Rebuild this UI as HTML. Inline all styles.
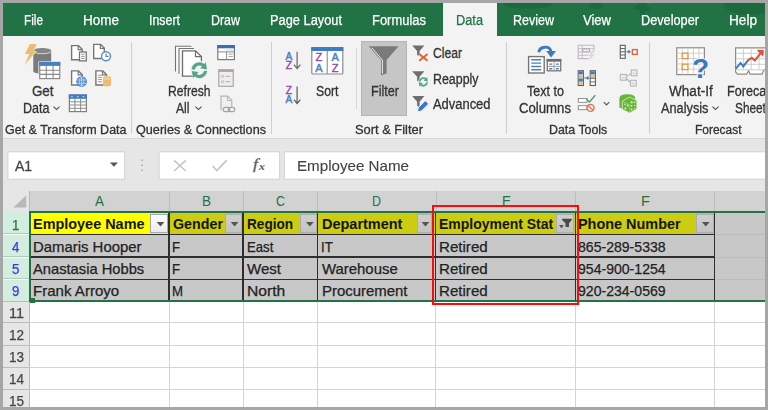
<!DOCTYPE html>
<html><head><meta charset="utf-8"><title>Excel</title>
<style>
html,body{margin:0;padding:0}
body{width:768px;height:410px;overflow:hidden;position:relative;background:#a6a6a6;font-family:"Liberation Sans",sans-serif}
#app{position:absolute;left:0;top:0;width:768px;height:410px;overflow:hidden;filter:blur(0.45px)}
.a{position:absolute}
.t{position:absolute;white-space:nowrap;transform-origin:0 0;line-height:1}
svg{position:absolute;overflow:visible}
</style></head><body><div id="app">
<!-- bg -->
<div class="a" style="left:0px;top:0px;width:768px;height:36.4px;background:#217346;"></div>
<svg style="left:0;top:0" width="768" height="36" viewBox="0 0 768 36"><g fill="#1b6039" opacity="0.5"><ellipse cx="528" cy="4" rx="25" ry="4.5"/><ellipse cx="596" cy="5.5" rx="7" ry="3.5"/><path d="M638 3H647V7H651V11H645V14H640V10H635V6H638Z"/><ellipse cx="750" cy="4" rx="26" ry="11"/><ellipse cx="470" cy="2" rx="30" ry="3"/></g></svg>
<div class="a" style="left:443px;top:3px;width:54px;height:34px;background:#f3f3f3;"></div>
<div class="a" style="left:0px;top:36.4px;width:768px;height:101.6px;background:#f3f3f3;"></div>
<div class="a" style="left:0px;top:138px;width:768px;height:1px;background:#d6d6d6;"></div>
<div class="a" style="left:130.5px;top:42px;width:1px;height:92px;background:#cfcfcf;"></div>
<div class="a" style="left:271px;top:42px;width:1px;height:92px;background:#cfcfcf;"></div>
<div class="a" style="left:506px;top:42px;width:1px;height:92px;background:#cfcfcf;"></div>
<div class="a" style="left:648.5px;top:42px;width:1px;height:92px;background:#cfcfcf;"></div>
<div class="a" style="left:355.5px;top:47.5px;width:1px;height:61px;background:#d6d6d6;"></div>
<div class="a" style="left:361px;top:40.5px;width:45.5px;height:75.5px;background:#c6c6c6;border:1px solid #b4b4b4;box-sizing:border-box;"></div>
<div class="a" style="left:0px;top:139px;width:768px;height:52px;background:#e6e6e6;"></div>
<svg style="left:0;top:140px" width="768" height="50" viewBox="0 140 768 50"><g fill="#fff" stroke="#d2d2d2" stroke-width="1"><rect x="7.9" y="151.8" width="116.7" height="27.4"/><rect x="159.1" y="151.8" width="120.5" height="27.4"/><rect x="284.3" y="151.8" width="490" height="27.4"/></g></svg>
<div class="a" style="left:0px;top:191px;width:768px;height:20px;background:#e6e6e6;"></div>
<div class="a" style="left:29.5px;top:191px;width:740px;height:20px;background:#d2d2d2;"></div>
<div class="a" style="left:168.5px;top:191px;width:1px;height:20px;background:#bdbdbd;"></div>
<div class="a" style="left:242.5px;top:191px;width:1px;height:20px;background:#bdbdbd;"></div>
<div class="a" style="left:317px;top:191px;width:1px;height:20px;background:#bdbdbd;"></div>
<div class="a" style="left:435.5px;top:191px;width:1px;height:20px;background:#bdbdbd;"></div>
<div class="a" style="left:575px;top:191px;width:1px;height:20px;background:#bdbdbd;"></div>
<div class="a" style="left:714px;top:191px;width:1px;height:20px;background:#bdbdbd;"></div>
<div class="a" style="left:0px;top:211px;width:768px;height:200px;background:#fff;"></div>
<div class="a" style="left:29.5px;top:211px;width:740px;height:90px;background:#c8c8c8;"></div>
<div class="a" style="left:0px;top:211px;width:29px;height:200px;background:#e6e6e6;"></div>
<div class="a" style="left:0px;top:212px;width:29px;height:89px;background:#d3eddf;"></div>
<div class="a" style="left:28.7px;top:191px;width:1px;height:220px;background:#b9b9b9;"></div>
<div class="a" style="left:0px;top:233.3px;width:29px;height:1px;background:#b4c9bd;"></div>
<div class="a" style="left:0px;top:234.3px;width:29px;height:1.2px;background:#f4fbf7;"></div>
<div class="a" style="left:0px;top:255.8px;width:29px;height:1px;background:#b4c9bd;"></div>
<div class="a" style="left:0px;top:256.8px;width:29px;height:1.2px;background:#f4fbf7;"></div>
<div class="a" style="left:0px;top:278.1px;width:29px;height:1px;background:#b4c9bd;"></div>
<div class="a" style="left:0px;top:279.1px;width:29px;height:1.2px;background:#f4fbf7;"></div>
<div class="a" style="left:0px;top:300.5px;width:29px;height:1px;background:#bdbdbd;"></div>
<div class="a" style="left:0px;top:322.2px;width:29px;height:1px;background:#bdbdbd;"></div>
<div class="a" style="left:0px;top:344.5px;width:29px;height:1px;background:#bdbdbd;"></div>
<div class="a" style="left:0px;top:366.5px;width:29px;height:1px;background:#bdbdbd;"></div>
<div class="a" style="left:0px;top:388.7px;width:29px;height:1px;background:#bdbdbd;"></div>
<div class="a" style="left:29px;top:322.2px;width:740px;height:1px;background:#d4d4d4;"></div>
<div class="a" style="left:29px;top:344.5px;width:740px;height:1px;background:#d4d4d4;"></div>
<div class="a" style="left:29px;top:366.5px;width:740px;height:1px;background:#d4d4d4;"></div>
<div class="a" style="left:29px;top:388.7px;width:740px;height:1px;background:#d4d4d4;"></div>
<div class="a" style="left:168.5px;top:301px;width:1px;height:110px;background:#d4d4d4;"></div>
<div class="a" style="left:242.5px;top:301px;width:1px;height:110px;background:#d4d4d4;"></div>
<div class="a" style="left:317.2px;top:301px;width:1px;height:110px;background:#d4d4d4;"></div>
<div class="a" style="left:435px;top:301px;width:1px;height:110px;background:#d4d4d4;"></div>
<div class="a" style="left:574.7px;top:301px;width:1px;height:110px;background:#d4d4d4;"></div>
<div class="a" style="left:713.8px;top:301px;width:1px;height:110px;background:#d4d4d4;"></div>
<div class="a" style="left:715px;top:234px;width:54px;height:1px;background:#bcbcbc;"></div>
<div class="a" style="left:715px;top:256.5px;width:54px;height:1px;background:#bcbcbc;"></div>
<div class="a" style="left:715px;top:278.8px;width:54px;height:1px;background:#bcbcbc;"></div>
<div class="a" style="left:31.4px;top:213px;width:137px;height:21px;background:#ffff00;"></div>
<div class="a" style="left:169.5px;top:213px;width:545px;height:21px;background:#cccc12;"></div>
<div class="a" style="left:168.4px;top:213px;width:1.2px;height:88px;background:#2e2e2e;"></div>
<div class="a" style="left:242.4px;top:213px;width:1.2px;height:88px;background:#2e2e2e;"></div>
<div class="a" style="left:317.1px;top:213px;width:1.2px;height:88px;background:#2e2e2e;"></div>
<div class="a" style="left:434.7px;top:213px;width:1.2px;height:88px;background:#2e2e2e;"></div>
<div class="a" style="left:574.8px;top:213px;width:1.2px;height:88px;background:#2e2e2e;"></div>
<div class="a" style="left:713.7px;top:213px;width:1.2px;height:88px;background:#2e2e2e;"></div>
<div class="a" style="left:30px;top:233.9px;width:685px;height:1.2px;background:#2e2e2e;"></div>
<div class="a" style="left:30px;top:256.4px;width:685px;height:1.2px;background:#2e2e2e;"></div>
<div class="a" style="left:30px;top:278.7px;width:685px;height:1.2px;background:#2e2e2e;"></div>
<div class="a" style="left:150.3px;top:213.8px;width:18px;height:18.8px;background:linear-gradient(#fdfdfd,#ececec);border:1px solid #a8a8a8;box-sizing:border-box;"></div>
<svg style="left:0;top:0" width="768" height="410" viewBox="0 0 768 410"><path d="M156.6 222H164.4L160.5 226.5Z" fill="#555"/></svg>
<div class="a" style="left:224.5px;top:213.8px;width:17.8px;height:18.8px;background:linear-gradient(#cfcfcf,#c3c3c3);border:1px solid #adadad;box-sizing:border-box;"></div>
<svg style="left:0;top:0" width="768" height="410" viewBox="0 0 768 410"><path d="M230.7 222H238.5L234.6 226.5Z" fill="#555"/></svg>
<div class="a" style="left:300.3px;top:213.8px;width:16.7px;height:18.8px;background:linear-gradient(#cfcfcf,#c3c3c3);border:1px solid #adadad;box-sizing:border-box;"></div>
<svg style="left:0;top:0" width="768" height="410" viewBox="0 0 768 410"><path d="M305.95 222H313.75L309.85 226.5Z" fill="#555"/></svg>
<div class="a" style="left:416.7px;top:213.8px;width:15.1px;height:18.8px;background:linear-gradient(#cfcfcf,#c3c3c3);border:1px solid #adadad;box-sizing:border-box;"></div>
<svg style="left:0;top:0" width="768" height="410" viewBox="0 0 768 410"><path d="M421.55 222H429.35L425.45 226.5Z" fill="#555"/></svg>
<div class="a" style="left:555.8px;top:213.8px;width:18.4px;height:18.8px;background:linear-gradient(#cfcfcf,#c3c3c3);border:1px solid #adadad;box-sizing:border-box;"></div>
<svg style="left:0;top:0" width="768" height="410" viewBox="0 0 768 410"><path d="M562.1 218.8H571.8V219.9L569 223.3V227.1H565.5V223.3L562.1 219.9Z" fill="#4a4a4a"/><path d="M559.1 225.1H563.8L561.45 228.5Z" fill="#555"/></svg>
<div class="a" style="left:695.5px;top:213.8px;width:18.2px;height:18.8px;background:linear-gradient(#cfcfcf,#c3c3c3);border:1px solid #adadad;box-sizing:border-box;"></div>
<svg style="left:0;top:0" width="768" height="410" viewBox="0 0 768 410"><path d="M701.9 222H709.7L705.8 226.5Z" fill="#555"/></svg>
<!-- icons -->
<svg style="left:0;top:0" width="768" height="190" viewBox="0 0 768 190">
<defs>
  <g id="doc"><path d="M0.7 0.7H7.6L11.3 4.4V14.8H0.7Z" fill="#fff" stroke="#767676" stroke-width="1.4"/><path d="M7.3 0.9V4.7H11.1" fill="none" stroke="#767676" stroke-width="1.2"/></g>
  <g id="funnel"><path d="M0 0H12.2L7.4 5.6V11.2L4.9 9.6V5.6Z" fill="#6e6e6e"/></g>
  <g id="refresh"><path d="M-6.2 -0.7A6.2 6.2 0 0 1 4.4 -4.4" fill="none" stroke-width="3.2"/><path d="M6.4 -8L7.6 -0.7L0.8 -1.9Z" stroke="none"/><path d="M6.2 0.7A6.2 6.2 0 0 1 -4.4 4.4" fill="none" stroke-width="3.2"/><path d="M-6.4 8L-7.6 0.7L-0.8 1.9Z" stroke="none"/></g>
</defs>

<!-- ===== Get Data big icon ===== -->
<path d="M33.3 50.7V71.2A8.95 2.6 0 0 0 51.2 71.2V50.7Z" fill="#7b7b7b"/>
<ellipse cx="42.25" cy="50.7" rx="8.95" ry="2.7" fill="#858585"/>
<path d="M33.6 51.6A8.9 2.7 0 0 0 50.9 51.6" fill="none" stroke="#e4e4e4" stroke-width="0.9"/>
<path d="M29.8 43.9H36.6L33.4 51.6H36L24.8 64.8L29.2 54H25Z" fill="#eabd72" stroke="#f3f3f3" stroke-width="1" paint-order="stroke"/>
<rect x="38.4" y="61.3" width="22.4" height="18.4" fill="#f3f3f3"/>
<rect x="39.7" y="62.4" width="20" height="16.2" fill="#fff" stroke="#8a8a8a" stroke-width="1.2"/>
<rect x="39.1" y="62" width="21.2" height="3.9" fill="#4480c6"/>
<path d="M46.3 65.9V78.6M53.1 65.9V78.6M39.7 70.2H59.7M39.7 74.4H59.7" stroke="#8a8a8a" stroke-width="1.1" fill="none"/>

<!-- ===== small icons: Get & Transform ===== -->
<!-- From Text/CSV -->
<use href="#doc" x="70.9" y="44.9"/>
<rect x="79.5" y="52" width="6.8" height="8.9" fill="#fff" stroke="#767676" stroke-width="1.3"/>
<path d="M81.2 54.3H84.6M81.2 56.4H84.6M81.2 58.5H84.6" stroke="#8c8c8c" stroke-width="0.9"/>
<!-- Recent Sources -->
<use href="#doc" x="93" y="43.7"/>
<circle cx="106" cy="56.2" r="4.5" fill="#fff" stroke="#5c90cb" stroke-width="1.5"/>
<path d="M106 53.4V56.4H108.6" fill="none" stroke="#7a7a7a" stroke-width="1.1"/>
<!-- From Web -->
<use href="#doc" x="70.9" y="70.2"/>
<circle cx="81.6" cy="81.6" r="5.3" fill="#4a86c6"/>
<ellipse cx="81.6" cy="81.6" rx="2.3" ry="4.4" fill="none" stroke="#cfe0f2" stroke-width="0.8"/>
<path d="M77.2 80H86M77.2 83.2H86M81.6 77.2V86" stroke="#cfe0f2" stroke-width="0.8" fill="none"/>
<!-- Existing Connections -->
<use href="#doc" x="95.2" y="70.2"/>
<path d="M97.8 75.2H102M97.8 77.4H102M97.8 79.6H102M97.8 81.8H102" stroke="#8c8c8c" stroke-width="0.9"/>
<path d="M102.9 77.3V84.8A4.1 1.6 0 0 0 111.1 84.8V77.3Z" fill="#eabd72"/>
<ellipse cx="107" cy="77.3" rx="4.1" ry="1.6" fill="#efc988"/>
<path d="M103.1 78.1A4 1.5 0 0 0 110.9 78.1" fill="none" stroke="#f7e3bf" stroke-width="0.7"/>
<!-- From Table/Range -->
<rect x="69.4" y="95" width="17" height="16.6" fill="#fff" stroke="#7e7e7e" stroke-width="1.2"/>
<rect x="68.8" y="94.4" width="18.2" height="4.4" fill="#3f7cc4"/>
<path d="M74.9 98.8V111.6M80.6 98.8V111.6M69.4 101.8H86.4M69.4 105H86.4M69.4 108.3H86.4" stroke="#8a8a8a" stroke-width="1" fill="none"/>
<path d="M70.8 96.2H73.2L72 97.6ZM76.6 96.2H79L77.8 97.6ZM82.3 96.2H84.7L83.5 97.6Z" fill="#e6eef8"/>

<!-- ===== Refresh All ===== -->
<rect x="175.5" y="46.3" width="16" height="25.2" fill="#fbfbfb"/><path d="M175.5 71.5V46.3H191.4" fill="none" stroke="#747474" stroke-width="1.1"/>
<rect x="179" y="48.5" width="15" height="25.3" fill="#fbfbfb"/><path d="M179 73.8V48.5H194" fill="none" stroke="#747474" stroke-width="1.1"/>
<path d="M182.5 50.8H195.6L201.4 56.6V76.2H182.5Z" fill="#fff" stroke="#6c6c6c" stroke-width="1.3"/>
<path d="M195.5 51V56.7H201.2" fill="none" stroke="#6c6c6c" stroke-width="1.2"/>
<circle cx="199.4" cy="70.2" r="9.4" fill="#f3f3f3"/>
<g transform="translate(199.4 70.2)" fill="#57a688" stroke="#57a688"><use href="#refresh"/></g>

<!-- Queries & Connections -->
<rect x="217.8" y="45.6" width="16.6" height="14" fill="#fff" stroke="#7a7a7a" stroke-width="1.2"/>
<rect x="217.2" y="45" width="17.8" height="3.3" fill="#3a6db5"/>
<path d="M217.8 51.9H234.4M226.6 51.9V59.6" stroke="#8a8a8a" stroke-width="1" fill="none"/>
<path d="M228.6 54.2H232.8M228.6 56.5H232.8" stroke="#9a9a9a" stroke-width="0.9"/>
<path d="M226.5 50H227.5M228.6 50H229.6M230.7 50H231.7M232.6 50H233.4" stroke="#9a9a9a" stroke-width="0.9"/>
<!-- Properties (disabled) -->
<rect x="218.8" y="69.9" width="14.4" height="16.4" fill="#f1ebf2" stroke="#a2a2a2" stroke-width="1.1"/>
<rect x="218.3" y="69.4" width="15.4" height="2.5" fill="#a6a6a6"/>
<circle cx="222.5" cy="76.3" r="1.2" fill="none" stroke="#b0b0b0" stroke-width="0.8"/>
<circle cx="222.5" cy="81.7" r="1.2" fill="none" stroke="#b0b0b0" stroke-width="0.8"/>
<path d="M225.4 76.3H230.4M225.4 81.7H230.4" stroke="#b0b0b0" stroke-width="1"/>
<!-- Edit Links (disabled) -->
<path d="M221 110V96.2H227.6L231.8 100.4V106.5" fill="#f3eef4" stroke="#b4b4b4" stroke-width="1.2"/>
<path d="M227.4 96.4V100.6H231.6" fill="none" stroke="#b4b4b4" stroke-width="1"/>
<rect x="223.2" y="107.4" width="6.6" height="4.2" rx="2.1" fill="none" stroke="#a4a4a4" stroke-width="1.2"/>
<rect x="228.2" y="107.4" width="6.6" height="4.2" rx="2.1" fill="none" stroke="#a4a4a4" stroke-width="1.2"/>

<!-- ===== Sort icons ===== -->
<g font-family="Liberation Sans, sans-serif" font-size="10.2px" text-anchor="middle" stroke-width="0.45">
  <text x="288.9" y="60.2" fill="#4a80c2" stroke="#4a80c2">A</text>
  <text x="288.9" y="69" fill="#9248aa" stroke="#9248aa">Z</text>
  <text x="288.9" y="94.4" fill="#9248aa" stroke="#9248aa">Z</text>
  <text x="288.9" y="103.4" fill="#4a80c2" stroke="#4a80c2">A</text>
</g>
<path d="M297.1 51.7V68M294 64.6L297.1 68.6L300.4 64.6" fill="none" stroke="#666" stroke-width="1.2"/>
<path d="M297.1 86.6V103M294 99.6L297.1 103.6L300.4 99.6" fill="none" stroke="#5a5a5a" stroke-width="1.2"/>
<!-- big Sort -->
<rect x="311.8" y="47.6" width="31" height="26.4" rx="1" fill="#fff" stroke="#8a8a8a" stroke-width="1.2"/>
<rect x="311.2" y="47" width="32.2" height="4" fill="#3f7cc4"/>
<path d="M327.2 51V74" stroke="#8a8a8a" stroke-width="1.1"/>
<g font-family="Liberation Sans, sans-serif" font-size="11px" text-anchor="middle" stroke-width="0.45">
  <text x="318.9" y="61" fill="#9248aa" stroke="#9248aa">Z</text>
  <text x="318.9" y="72.2" fill="#4a80c2" stroke="#4a80c2">A</text>
  <text x="335.1" y="61" fill="#4a80c2" stroke="#4a80c2">A</text>
  <text x="335.1" y="72.2" fill="#9248aa" stroke="#9248aa">Z</text>
</g>

<!-- ===== Filter (big funnel) ===== -->
<path d="M368.7 46.2H398.5L386.6 60V73.4L381 75.2V60Z" fill="#7a7a7a"/>
<path d="M371.8 47.8L382.4 60V73.6" fill="none" stroke="#ececec" stroke-width="1"/>

<!-- Clear -->
<use href="#funnel" x="412.2" y="45.4"/>
<path d="M419.2 54L427.6 60.8M427.6 54L419.2 60.8" stroke="#f3f3f3" stroke-width="3.4" fill="none"/><path d="M419.2 54L427.6 60.8M427.6 54L419.2 60.8" stroke="#e2603c" stroke-width="1.9" fill="none"/>
<!-- Reapply -->
<use href="#funnel" x="412.2" y="71.2"/>
<circle cx="423.3" cy="81.9" r="5.2" fill="#f3f3f3"/>
<g transform="translate(423.3 81.9) scale(0.6)" fill="#57a688" stroke="#57a688"><use href="#refresh"/></g>
<!-- Advanced -->
<use href="#funnel" x="412.2" y="96.1"/>
<path d="M417.4 111.9L418.3 107.6L425.3 100.6L428.6 103.9L421.6 110.9Z" fill="#3b78c4" stroke="#f3f3f3" stroke-width="1"/>

<!-- ===== Text to Columns ===== -->
<rect x="528.6" y="56.6" width="15.6" height="16.4" fill="#fff" stroke="#767676" stroke-width="1.4"/>
<path d="M531.2 59.7H541.2M531.2 63.1H541.2M531.2 66.5H541.2M531.2 69.8H541.2" stroke="#4a80c0" stroke-width="1.4"/>
<rect x="547.3" y="59.6" width="13.4" height="11.2" fill="#fff" stroke="#767676" stroke-width="1.3"/>
<rect x="546.7" y="59" width="14.6" height="2.7" fill="#6e6e6e"/>
<path d="M554 61.7V71M547.3 66.4H560.7" stroke="#9a9a9a" stroke-width="1"/>
<path d="M549.2 64.1H552.2M555.8 64.1H558.8M549.2 68.7H552.2M555.8 68.7H558.8" stroke="#4a80c0" stroke-width="1.4"/>
<path d="M538.8 52.2C539.6 46.4 549.8 44.8 551 51.8" fill="none" stroke="#3f7ac2" stroke-width="2.9"/>
<path d="M546.2 51H556L551.1 57.4Z" fill="#3f7ac2"/>

<!-- Flash fill (disabled) -->
<rect x="578.2" y="45.2" width="15.8" height="13.4" fill="#f5f3f6"/>
<g stroke="#bdb9bf" fill="none" stroke-width="0.9">
<path d="M594 50V45.2H578.2V58.6H588.6" stroke-width="1.1"/>
<path d="M578.2 48.6H594M578.2 52H592M578.2 55.3H590M582.2 45.2V58.6"/>
<rect x="582.7" y="48.9" width="6.8" height="2.8" rx="0.6" fill="#f5f3f6" stroke="#aeaab0" stroke-width="1.1"/>
</g>
<path d="M592 50.3H595.2L592.4 54.5H594.8L588.5 61.2L590.6 56.2H588.5Z" fill="#dcd8de" stroke="#f3f3f3" stroke-width="0.9" paint-order="stroke"/>

<!-- Remove duplicates -->
<rect x="578.2" y="70.7" width="5.2" height="14.8" fill="#fff" stroke="#606060" stroke-width="1.1"/>
<rect x="578.8" y="71.3" width="4" height="3.1" fill="#3b78c4"/><rect x="578.8" y="74.9" width="4" height="3.1" fill="#eabd72"/>
<rect x="578.8" y="78.5" width="4" height="3.1" fill="#3b78c4"/><rect x="578.8" y="82.1" width="4" height="2.8" fill="#eabd72"/>
<rect x="590.2" y="70.7" width="5.2" height="14.8" fill="#fff" stroke="#606060" stroke-width="1.1"/>
<rect x="590.8" y="71.3" width="4" height="3.1" fill="#3b78c4"/><rect x="590.8" y="74.9" width="4" height="3.1" fill="#eabd72"/>
<path d="M590.2 78.3H595.4M590.2 81.9H595.4" stroke="#606060" stroke-width="0.9"/>
<path d="M584.4 78H588" stroke="#3b78c4" stroke-width="1.2"/><path d="M587 76L589.6 78L587 80Z" fill="#3b78c4"/>

<!-- Data validation -->
<rect x="578.3" y="98.5" width="8.8" height="3.8" fill="#fff" stroke="#868686" stroke-width="0.9"/>
<rect x="578.3" y="105.7" width="8.8" height="4" fill="#fff" stroke="#868686" stroke-width="0.9"/>
<path d="M586.4 99.2L589.5 102L595.3 95.2" fill="none" stroke="#47a277" stroke-width="1.5"/>
<circle cx="590.5" cy="107.9" r="3.5" fill="#fbeee9" stroke="#e46a48" stroke-width="1.4"/>
<path d="M588 105.4L593 110.4" stroke="#e46a48" stroke-width="1.3"/>
<path d="M603.8 102.2L606.5 104.9L609.2 102.2" fill="none" stroke="#555" stroke-width="1.2"/>

<!-- Consolidate -->
<rect x="620.3" y="45.3" width="4.9" height="13" fill="#fff" stroke="#5c5c5c" stroke-width="1.1"/>
<path d="M620.3 48.6H625.2M620.3 51.8H625.2M620.3 55H625.2" stroke="#5c5c5c" stroke-width="1"/>
<path d="M626.6 51.8H629" stroke="#3b78c4" stroke-width="1.2"/><path d="M628.4 49.8L631 51.8L628.4 53.8Z" fill="#3b78c4"/>
<rect x="632.4" y="49.6" width="4.8" height="4.8" fill="#fff" stroke="#e2603c" stroke-width="1.4"/>

<!-- Relationships (disabled) -->
<g stroke="#b2b2b2" stroke-width="1" fill="#f1ebf2">
<path d="M626.4 76.6L631 73.6M626.4 78.4L630.4 82.6" fill="none" stroke-width="1.1"/>
<rect x="620.3" y="74.4" width="6" height="5.8"/>
<rect x="631.2" y="70" width="5.8" height="5.8"/>
<rect x="630.4" y="80.3" width="5.8" height="5.8"/>
</g>
<path d="M622 77.6H624.6M632.8 73.2H635.4M632 83.5H634.6" stroke="#c6c0c8" stroke-width="0.8"/>

<!-- Manage Data Model (green cube) -->
<path d="M619.4 98.2Q619.4 94.2 627.2 94.2Q635.2 94.2 635.2 98.2V104H624V109.4L619.4 107.6Z" fill="#68b536"/>
<path d="M622.3 101.2L629.6 97L636.9 100.6V109L629.6 112.9L622.3 109.6Z" fill="#68b536" stroke="#f3f3f3" stroke-width="0.7"/>
<path d="M622.6 101.4L629.6 104.6L636.6 100.8M629.6 104.6V112.4" fill="none" stroke="#9fd47c" stroke-width="0.7"/>
<g fill="#e2f3d6">
<circle cx="625" cy="104.2" r="0.8"/><circle cx="627.6" cy="105.6" r="1"/><circle cx="625.4" cy="108.6" r="1"/>
<circle cx="631.6" cy="102" r="1"/><circle cx="634.6" cy="102.4" r="0.7"/>
<circle cx="631.6" cy="105.8" r="0.9"/><circle cx="634.6" cy="105.6" r="0.7"/>
<circle cx="631.6" cy="109.4" r="0.9"/><circle cx="634.6" cy="108.6" r="0.7"/>
</g>

<!-- ===== What-If ===== -->
<rect x="676.8" y="47.8" width="27.6" height="26.8" fill="#fff" stroke="#8a8a8a" stroke-width="1.2"/>
<path d="M682.3 47.8V74.6M687.9 47.8V74.6M693.4 47.8V74.6M698.9 47.8V74.6M676.8 53.2H704.4M676.8 58.5H704.4M676.8 63.9H704.4M676.8 69.2H704.4" stroke="#cacaca" stroke-width="0.9" fill="none"/>
<rect x="682.2" y="53.2" width="5.7" height="5.4" fill="#fff" stroke="#e8953a" stroke-width="1.3"/>
<rect x="682.2" y="64.2" width="5.7" height="5.4" fill="#fff" stroke="#e8953a" stroke-width="1.3"/>
<text x="700.6" y="78.4" font-family="Liberation Sans, sans-serif" font-weight="bold" font-size="28px" text-anchor="middle" fill="#3b78c4" stroke="#f4f4f4" stroke-width="2.2" paint-order="stroke">?</text>

<!-- ===== Forecast Sheet ===== -->
<path d="M735.6 47.8H770V69.8H764L762 74.2H750L748.6 70.6L746.6 74.2H737.6L735.6 72Z" fill="#fff" stroke="#8a8a8a" stroke-width="1.2"/>
<path d="M735.6 69.8H770M743.4 47.8V69.8M751.2 47.8V69.8M759 47.8V69.8M735.6 53.3H770M735.6 58.8H770M735.6 64.3H770" stroke="#cacaca" stroke-width="0.9" fill="none"/>
<path d="M735.9 68.6L740.6 63L743.3 66.4L748.2 60.2" fill="none" stroke="#3b78c4" stroke-width="1.9"/>
<path d="M748 60.4L751.8 57.8L754.8 60.4L761.6 52.2" fill="none" stroke="#d9583a" stroke-width="2.1"/>
<path d="M756.6 50L763.8 49.8L763.4 57Z" fill="#d9583a"/>

<!-- chevrons next to Data / All / Analysis -->
<g fill="none" stroke="#555" stroke-width="1.1">
<path d="M53.4 106.6L56.5 109.5L59.6 106.6"/>
<path d="M195.4 106.6L198.5 109.5L201.6 106.6"/>
<path d="M712.4 106.6L715.5 109.5L718.6 106.6"/>
</g>

<!-- ===== formula bar glyphs ===== -->
<path d="M109.9 162.4H117.9L113.9 166.8Z" fill="#555"/>
<path d="M142.1 159.6V161.1M142.1 164.5V166M142.1 169.4V170.9" stroke="#a8a8a8" stroke-width="1.5"/>
<path d="M174 160.4L185.8 171M185.8 160.4L174 171" stroke="#c4c4c4" stroke-width="1.5" fill="none"/>
<path d="M212.6 166L216.9 170.5L226.6 160.3" stroke="#c4c4c4" stroke-width="1.7" fill="none"/>
<text x="253" y="169" font-family="Liberation Serif, serif" font-style="italic" font-size="15px" fill="#5c5c5c" stroke="#5c5c5c" stroke-width="0.3" transform="translate(253 169) scale(1.18 1) translate(-253 -169)">f</text>
<text x="258.8" y="169.9" font-family="Liberation Serif, serif" font-style="italic" font-weight="bold" font-size="10px" fill="#5c5c5c" transform="translate(258.8 169.9) scale(1.25 1) translate(-258.8 -169.9)">x</text>
<!-- select-all triangle -->
<path d="M26.2 195.6V207.6H13.2Z" fill="#b8b8b8"/>
</svg>
<!-- text -->
<div class="t" style="left:24.00px;top:12.95px;font-size:14px;font-weight:normal;color:#fff;transform:scaleX(0.8421);-webkit-text-stroke:0.25px #fff;">File</div>
<div class="t" style="left:83.00px;top:12.95px;font-size:14px;font-weight:normal;color:#fff;transform:scaleX(0.9636);-webkit-text-stroke:0.25px #fff;">Home</div>
<div class="t" style="left:149.00px;top:12.95px;font-size:14px;font-weight:normal;color:#fff;transform:scaleX(0.8853);-webkit-text-stroke:0.25px #fff;">Insert</div>
<div class="t" style="left:211.00px;top:12.95px;font-size:14px;font-weight:normal;color:#fff;transform:scaleX(0.8876);-webkit-text-stroke:0.25px #fff;">Draw</div>
<div class="t" style="left:270.00px;top:12.95px;font-size:14px;font-weight:normal;color:#fff;transform:scaleX(0.9157);-webkit-text-stroke:0.25px #fff;">Page Layout</div>
<div class="t" style="left:372.00px;top:12.95px;font-size:14px;font-weight:normal;color:#fff;transform:scaleX(0.9253);-webkit-text-stroke:0.25px #fff;">Formulas</div>
<div class="t" style="left:513.00px;top:12.95px;font-size:14px;font-weight:normal;color:#fff;transform:scaleX(0.8931);-webkit-text-stroke:0.25px #fff;">Review</div>
<div class="t" style="left:583.00px;top:12.95px;font-size:14px;font-weight:normal;color:#fff;transform:scaleX(0.9304);-webkit-text-stroke:0.25px #fff;">View</div>
<div class="t" style="left:641.00px;top:12.95px;font-size:14px;font-weight:normal;color:#fff;transform:scaleX(0.9087);-webkit-text-stroke:0.25px #fff;">Developer</div>
<div class="t" style="left:729.00px;top:12.95px;font-size:14px;font-weight:normal;color:#fff;transform:scaleX(0.9723);-webkit-text-stroke:0.25px #fff;">Help</div>
<div class="t" style="left:456.00px;top:12.95px;font-size:14px;font-weight:normal;color:#217346;transform:scaleX(0.9128);-webkit-text-stroke:0.25px #217346;">Data</div>
<div class="t" style="left:31.50px;top:84.45px;font-size:14px;font-weight:normal;color:#333;transform:scaleX(0.9522);-webkit-text-stroke:0.3px #333;">Get</div>
<div class="t" style="left:23.00px;top:101.35px;font-size:14px;font-weight:normal;color:#333;transform:scaleX(0.8959);-webkit-text-stroke:0.3px #333;">Data</div>
<div class="t" style="left:5.00px;top:123.62px;font-size:12.5px;font-weight:normal;color:#333;transform:scaleX(0.9994);-webkit-text-stroke:0.3px #333;">Get &amp; Transform Data</div>
<div class="t" style="left:136.00px;top:123.62px;font-size:12.5px;font-weight:normal;color:#333;transform:scaleX(1.0113);-webkit-text-stroke:0.3px #333;">Queries &amp; Connections</div>
<div class="t" style="left:167.50px;top:84.45px;font-size:14px;font-weight:normal;color:#333;transform:scaleX(0.8668);-webkit-text-stroke:0.3px #333;">Refresh</div>
<div class="t" style="left:175.50px;top:101.35px;font-size:14px;font-weight:normal;color:#333;transform:scaleX(0.8675);-webkit-text-stroke:0.3px #333;">All</div>
<div class="t" style="left:316.00px;top:84.45px;font-size:14px;font-weight:normal;color:#333;transform:scaleX(0.8759);-webkit-text-stroke:0.3px #333;">Sort</div>
<div class="t" style="left:370.50px;top:84.45px;font-size:14px;font-weight:normal;color:#333;transform:scaleX(0.8996);-webkit-text-stroke:0.3px #333;">Filter</div>
<div class="t" style="left:354.50px;top:123.62px;font-size:12.5px;font-weight:normal;color:#333;transform:scaleX(1.0303);-webkit-text-stroke:0.3px #333;">Sort &amp; Filter</div>
<div class="t" style="left:432.50px;top:46.15px;font-size:14px;font-weight:normal;color:#333;transform:scaleX(0.8665);-webkit-text-stroke:0.3px #333;">Clear</div>
<div class="t" style="left:432.50px;top:71.65px;font-size:14px;font-weight:normal;color:#333;transform:scaleX(0.8856);-webkit-text-stroke:0.3px #333;">Reapply</div>
<div class="t" style="left:432.50px;top:96.95px;font-size:14px;font-weight:normal;color:#333;transform:scaleX(0.9232);-webkit-text-stroke:0.3px #333;">Advanced</div>
<div class="t" style="left:526.50px;top:84.45px;font-size:14px;font-weight:normal;color:#333;transform:scaleX(0.8970);-webkit-text-stroke:0.3px #333;">Text to</div>
<div class="t" style="left:518.50px;top:101.35px;font-size:14px;font-weight:normal;color:#333;transform:scaleX(0.9412);-webkit-text-stroke:0.3px #333;">Columns</div>
<div class="t" style="left:548.70px;top:123.62px;font-size:12.5px;font-weight:normal;color:#333;transform:scaleX(0.9908);-webkit-text-stroke:0.3px #333;">Data Tools</div>
<div class="t" style="left:668.60px;top:84.45px;font-size:14px;font-weight:normal;color:#333;transform:scaleX(0.9684);-webkit-text-stroke:0.3px #333;">What-If</div>
<div class="t" style="left:661.00px;top:101.35px;font-size:14px;font-weight:normal;color:#333;transform:scaleX(0.9110);-webkit-text-stroke:0.3px #333;">Analysis</div>
<div class="t" style="left:694.50px;top:123.62px;font-size:12.5px;font-weight:normal;color:#333;transform:scaleX(0.9560);-webkit-text-stroke:0.3px #333;">Forecast</div>
<div class="t" style="left:726.50px;top:84.45px;font-size:14px;font-weight:normal;color:#333;transform:scaleX(0.8996);-webkit-text-stroke:0.3px #333;">Forecast</div>
<div class="t" style="left:735.40px;top:101.35px;font-size:14px;font-weight:normal;color:#333;transform:scaleX(0.8444);-webkit-text-stroke:0.3px #333;">Sheet</div>
<div class="t" style="left:15.00px;top:158.73px;font-size:14.5px;font-weight:normal;color:#444;transform:scaleX(0.9690);-webkit-text-stroke:0.3px #444;">A1</div>
<div class="t" style="left:297.00px;top:158.73px;font-size:14.5px;font-weight:normal;color:#444;transform:scaleX(1.0449);-webkit-text-stroke:0.12px #444;">Employee Name</div>
<div class="t" style="left:95.20px;top:194.15px;font-size:14px;font-weight:normal;color:#217346;transform:scaleX(0.9632);">A</div>
<div class="t" style="left:202.00px;top:194.15px;font-size:14px;font-weight:normal;color:#217346;transform:scaleX(0.9632);">B</div>
<div class="t" style="left:275.50px;top:194.15px;font-size:14px;font-weight:normal;color:#217346;transform:scaleX(0.8889);">C</div>
<div class="t" style="left:372.00px;top:194.15px;font-size:14px;font-weight:normal;color:#217346;transform:scaleX(0.8889);">D</div>
<div class="t" style="left:501.50px;top:194.15px;font-size:14px;font-weight:normal;color:#217346;transform:scaleX(0.9632);">E</div>
<div class="t" style="left:641.00px;top:194.15px;font-size:14px;font-weight:normal;color:#217346;transform:scaleX(1.0511);">F</div>
<div class="t" style="left:12.30px;top:217.65px;font-size:14px;font-weight:normal;color:#217346;transform:scaleX(0.9491);-webkit-text-stroke:0.25px #217346;">1</div>
<div class="t" style="left:12.30px;top:240.15px;font-size:14px;font-weight:normal;color:#3838f0;transform:scaleX(0.9491);-webkit-text-stroke:0.25px #3838f0;">4</div>
<div class="t" style="left:12.30px;top:262.15px;font-size:14px;font-weight:normal;color:#3838f0;transform:scaleX(0.9491);-webkit-text-stroke:0.25px #3838f0;">5</div>
<div class="t" style="left:12.30px;top:284.15px;font-size:14px;font-weight:normal;color:#3838f0;transform:scaleX(0.9491);-webkit-text-stroke:0.25px #3838f0;">9</div>
<div class="t" style="left:8.50px;top:306.15px;font-size:14px;font-weight:normal;color:#444;transform:scaleX(1.0311);-webkit-text-stroke:0.25px #444;">11</div>
<div class="t" style="left:8.50px;top:328.15px;font-size:14px;font-weight:normal;color:#444;transform:scaleX(0.9629);-webkit-text-stroke:0.25px #444;">12</div>
<div class="t" style="left:8.50px;top:350.45px;font-size:14px;font-weight:normal;color:#444;transform:scaleX(0.9629);-webkit-text-stroke:0.25px #444;">13</div>
<div class="t" style="left:8.50px;top:372.45px;font-size:14px;font-weight:normal;color:#444;transform:scaleX(0.9629);-webkit-text-stroke:0.25px #444;">14</div>
<div class="t" style="left:8.50px;top:394.45px;font-size:14px;font-weight:normal;color:#444;transform:scaleX(0.9629);-webkit-text-stroke:0.25px #444;">15</div>
<div class="t" style="left:33.00px;top:218.32px;font-size:13.8px;font-weight:bold;color:#141400;transform:scaleX(1.0460);">Employee Name</div>
<div class="t" style="left:172.50px;top:218.32px;font-size:13.8px;font-weight:bold;color:#141400;transform:scaleX(1.0349);">Gender</div>
<div class="t" style="left:246.70px;top:218.32px;font-size:13.8px;font-weight:bold;color:#141400;transform:scaleX(0.9858);">Region</div>
<div class="t" style="left:322.20px;top:218.32px;font-size:13.8px;font-weight:bold;color:#141400;transform:scaleX(1.0486);">Department</div>
<div class="t" style="left:438.80px;top:218.32px;font-size:13.8px;font-weight:bold;color:#141400;transform:scaleX(1.0133);">Employment Stat</div>
<div class="t" style="left:578.40px;top:218.32px;font-size:13.8px;font-weight:bold;color:#141400;transform:scaleX(1.0456);">Phone Number</div>
<div class="t" style="left:32.80px;top:239.68px;font-size:14.2px;font-weight:normal;color:#222;transform:scaleX(1.0504);-webkit-text-stroke:0.25px #222;">Damaris Hooper</div>
<div class="t" style="left:171.70px;top:239.68px;font-size:14.2px;font-weight:normal;color:#222;transform:scaleX(0.9300);-webkit-text-stroke:0.25px #222;">F</div>
<div class="t" style="left:246.70px;top:239.68px;font-size:14.2px;font-weight:normal;color:#222;transform:scaleX(0.9264);-webkit-text-stroke:0.25px #222;">East</div>
<div class="t" style="left:321.40px;top:239.68px;font-size:14.2px;font-weight:normal;color:#222;transform:scaleX(0.9300);-webkit-text-stroke:0.25px #222;">IT</div>
<div class="t" style="left:439.00px;top:239.68px;font-size:14.2px;font-weight:normal;color:#222;transform:scaleX(1.0645);-webkit-text-stroke:0.25px #222;">Retired</div>
<div class="t" style="left:578.40px;top:239.68px;font-size:14.2px;font-weight:normal;color:#222;transform:scaleX(0.9914);-webkit-text-stroke:0.25px #222;">865-289-5338</div>
<div class="t" style="left:32.80px;top:261.68px;font-size:14.2px;font-weight:normal;color:#222;transform:scaleX(1.0367);-webkit-text-stroke:0.25px #222;">Anastasia Hobbs</div>
<div class="t" style="left:171.70px;top:261.68px;font-size:14.2px;font-weight:normal;color:#222;transform:scaleX(0.9300);-webkit-text-stroke:0.25px #222;">F</div>
<div class="t" style="left:246.70px;top:261.68px;font-size:14.2px;font-weight:normal;color:#222;transform:scaleX(1.0604);-webkit-text-stroke:0.25px #222;">West</div>
<div class="t" style="left:322.20px;top:261.68px;font-size:14.2px;font-weight:normal;color:#222;transform:scaleX(1.0509);-webkit-text-stroke:0.25px #222;">Warehouse</div>
<div class="t" style="left:439.00px;top:261.68px;font-size:14.2px;font-weight:normal;color:#222;transform:scaleX(1.0645);-webkit-text-stroke:0.25px #222;">Retired</div>
<div class="t" style="left:578.40px;top:261.68px;font-size:14.2px;font-weight:normal;color:#222;transform:scaleX(0.9914);-webkit-text-stroke:0.25px #222;">954-900-1254</div>
<div class="t" style="left:32.80px;top:283.68px;font-size:14.2px;font-weight:normal;color:#222;transform:scaleX(1.0613);-webkit-text-stroke:0.25px #222;">Frank Arroyo</div>
<div class="t" style="left:171.70px;top:283.68px;font-size:14.2px;font-weight:normal;color:#222;transform:scaleX(0.9300);-webkit-text-stroke:0.25px #222;">M</div>
<div class="t" style="left:246.70px;top:283.68px;font-size:14.2px;font-weight:normal;color:#222;transform:scaleX(1.1036);-webkit-text-stroke:0.25px #222;">North</div>
<div class="t" style="left:322.20px;top:283.68px;font-size:14.2px;font-weight:normal;color:#222;transform:scaleX(1.0527);-webkit-text-stroke:0.25px #222;">Procurement</div>
<div class="t" style="left:439.00px;top:283.68px;font-size:14.2px;font-weight:normal;color:#222;transform:scaleX(1.0645);-webkit-text-stroke:0.25px #222;">Retired</div>
<div class="t" style="left:578.40px;top:283.68px;font-size:14.2px;font-weight:normal;color:#222;transform:scaleX(0.9914);-webkit-text-stroke:0.25px #222;">920-234-0569</div>
<!-- fg -->
<div class="a" style="left:29.5px;top:211px;width:740px;height:2.1px;background:#217346;"></div>
<div class="a" style="left:29.3px;top:211px;width:2.1px;height:91px;background:#217346;"></div>
<div class="a" style="left:29.5px;top:300px;width:740px;height:2px;background:#217346;"></div>
<div class="a" style="left:29.5px;top:298px;width:5px;height:5px;background:#217346;"></div>
<div class="a" style="left:431.9px;top:205.1px;width:147.4px;height:99.9px;border:2.3px solid #fa0c0c;box-sizing:border-box;"></div>
<div class="a" style="left:0px;top:0px;width:768px;height:2.6px;background:#a6a6a6;"></div>
<div class="a" style="left:0px;top:0px;width:2.6px;height:410px;background:#a6a6a6;"></div>
<div class="a" style="left:765.4px;top:0px;width:2.6px;height:410px;background:#a6a6a6;"></div>
<div class="a" style="left:0px;top:407px;width:768px;height:3px;background:#a6a6a6;"></div>
</div></body></html>
